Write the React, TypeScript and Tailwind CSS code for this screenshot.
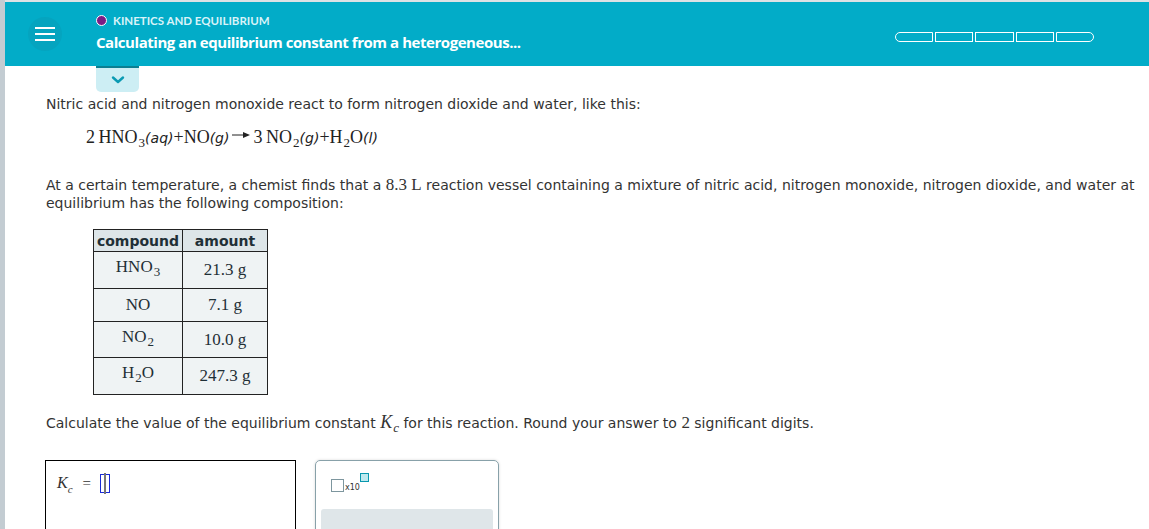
import React from "react";

const serif = { fontFamily: '"Liberation Serif", "Times New Roman", serif' };

function Sub({ children }: { children: React.ReactNode }) {
  return <sub className="text-[13px] relative top-[4px] align-baseline leading-none ml-[1px]">{children}</sub>;
}

export default function App() {
  return (
    <div className="w-[1149px] h-[529px] overflow-hidden bg-white flex" style={{ fontFamily: '"DejaVu Sans", Verdana, sans-serif' }}>
      <div className="w-[5px] h-full bg-[#c3ccd2] shrink-0" />
      <div className="flex-1 flex flex-col min-w-0">
        <div className="h-[2px] bg-[#dde2e5] shrink-0" />
        <header className="h-[64px] shrink-0 bg-[#02acc8] flex items-center relative">
          <div className="w-[34px] h-[34px] rounded-full bg-[#05a4bf] ml-[23px] flex flex-col items-center justify-center gap-[4px]">
            <div className="w-[20px] h-[2px] bg-white" />
            <div className="w-[20px] h-[2px] bg-white" />
            <div className="w-[20px] h-[2px] bg-white" />
          </div>
          <div className="ml-[34px] flex flex-col -mt-[3px]">
            <div className="flex items-center gap-[6px]" style={{ fontFamily: 'Lato, sans-serif' }}>
              <div className="w-[11px] h-[11px] rounded-full bg-[#7a1d84] border border-white" />
              <span className="text-[11.5px] font-bold text-[#d9f3f8] leading-none">KINETICS AND EQUILIBRIUM</span>
            </div>
            <div className="text-white font-bold text-[15px] leading-none mt-[9px] tracking-[-0.45px]" style={{ fontFamily: '"Open Sans", sans-serif' }}>
              Calculating an equilibrium constant from a heterogeneous...
            </div>
          </div>
          <div className="ml-auto mr-[55px] flex gap-[2px] mt-[6px]">
            <div className="w-[38px] h-[10px] border border-white rounded-l-full" />
            <div className="w-[38px] h-[10px] border border-white" />
            <div className="w-[39px] h-[10px] border border-white" />
            <div className="w-[38px] h-[10px] border border-white" />
            <div className="w-[38px] h-[10px] border border-white rounded-r-full" />
          </div>
          <div className="absolute left-[91px] top-[64px] w-[43px] h-[26px] bg-[#cdeef4] border-t-[2px] border-[#0b7f92] rounded-b-[5px] flex items-center justify-center">
            <svg width="14" height="10" viewBox="0 0 14 10">
              <path d="M2 2.5 L7 7 L12 2.5" stroke="#0a9ab3" strokeWidth="2.4" fill="none" strokeLinecap="round" strokeLinejoin="round" />
            </svg>
          </div>
        </header>
        <main className="pl-[41px] text-[14px] text-[#333] pt-[29px]">
          <p className="leading-[18px]">Nitric acid and nitrogen monoxide react to form nitrogen dioxide and water, like this:</p>
          <div className="ml-[40px] mt-[15px] text-[18px] text-[#222] flex items-baseline h-[20px] leading-none">
            <span style={serif}>2&#8201;HNO<Sub>3</Sub></span>
            <span className="italic text-[14px]">(aq)</span>
            <span style={serif}>+NO</span>
            <span className="italic text-[14px]">(g)</span>
            <span className="relative -top-[4px] mx-[2px] inline-flex items-center">
              <svg width="20" height="8" viewBox="0 0 20 8">
                <path d="M1 4 H14" stroke="#222" strokeWidth="1" />
                <path d="M12 1 L19 4 L12 7 Z" fill="#222" />
              </svg>
            </span>
            <span style={serif}>3&#8201;NO<Sub>2</Sub></span>
            <span className="italic text-[14px]">(g)</span>
            <span style={serif}>+H<Sub>2</Sub>O</span>
            <span className="italic text-[14px]">(l)</span>
          </div>
          <div className="leading-[18px] mt-[28px]">
            <div className="flex items-baseline whitespace-nowrap">
              <span>At a certain temperature, a chemist finds that a&nbsp;</span>
              <span style={serif} className="text-[17px] leading-none">8.3 L</span>
              <span>&nbsp;reaction vessel containing a mixture of nitric acid, nitrogen monoxide, nitrogen dioxide, and water at</span>
            </div>
            <div>equilibrium has the following composition:</div>
          </div>
          <table className="ml-[47px] mt-[17px] border-collapse border border-[#222] text-[#1f2f36]">
            <thead>
              <tr className="bg-[#dde5e8] h-[22px]">
                <th className="border border-[#222] px-[2px] font-semibold text-[14px] leading-none w-[89px]">compound</th>
                <th className="border border-[#222] font-semibold text-[14px] leading-none w-[85px]">amount</th>
              </tr>
            </thead>
            <tbody className="bg-[#eff3f4] text-[17px]" style={serif}>
              <tr className="h-[37px]">
                <td className="border border-[#222] text-center pb-[6px]">HNO<Sub>3</Sub></td>
                <td className="border border-[#222] text-center">21.3 g</td>
              </tr>
              <tr className="h-[33px]">
                <td className="border border-[#222] text-center">NO</td>
                <td className="border border-[#222] text-center">7.1 g</td>
              </tr>
              <tr className="h-[36px]">
                <td className="border border-[#222] text-center pb-[6px]">NO<Sub>2</Sub></td>
                <td className="border border-[#222] text-center">10.0 g</td>
              </tr>
              <tr className="h-[37px]">
                <td className="border border-[#222] text-center pb-[6px]">H<Sub>2</Sub>O</td>
                <td className="border border-[#222] text-center">247.3 g</td>
              </tr>
            </tbody>
          </table>
          <p className="leading-[18px] mt-[18px] flex items-baseline">
            Calculate the value of the equilibrium constant&nbsp;
            <span style={serif} className="italic text-[18px] leading-none">K</span>
            <span style={serif} className="italic text-[13px] relative top-[4px] ml-[1px] leading-none">c</span>
            &nbsp;for this reaction. Round your answer to&nbsp;<span style={serif} className="text-[17px] leading-none">2</span>&nbsp;significant digits.
          </p>
          <div className="flex mt-[28px] gap-[19px] -ml-[1px]">
            <div className="w-[251px] h-[90px] shrink-0 border border-black pl-[11px] pt-[10px] flex items-start">
              <span style={serif} className="italic text-[16px] text-[#333]">K</span>
              <span style={serif} className="italic text-[11px] relative top-[10px] text-[#333]">c</span>
              <span className="ml-[10px] text-[15px] text-[#333] mt-[1px]" style={serif}>=</span>
              <div className="ml-[9px] mt-[3px] w-[10px] h-[19px] border border-[#1a2bd6] relative">
                <div className="absolute left-[3px] top-[-2px] w-[2px] h-[21px] border-l border-r border-[#777]" />
              </div>
            </div>
            <div className="w-[184px] h-[90px] shrink-0 border border-[#88a1a9] rounded-[5px] shadow-[0_0_3px_rgba(0,0,0,0.15)] px-[5px] pt-[12px]">
              <div className="flex items-end ml-[10px]">
                <div className="w-[13px] h-[13px] border-[1.5px] border-[#7d969e] bg-white" />
                <span className="text-[8px] text-[#333] leading-none ml-[1px]">x10</span>
                <div className="w-[9px] h-[9px] border-[1.5px] border-[#0a98ae] bg-[#bfe9ef] mb-[10px]" />
              </div>
              <div className="mt-[17px] h-[24px] rounded-[3px] bg-[#dfe6e9]" />
            </div>
          </div>
        </main>
      </div>
    </div>
  );
}
